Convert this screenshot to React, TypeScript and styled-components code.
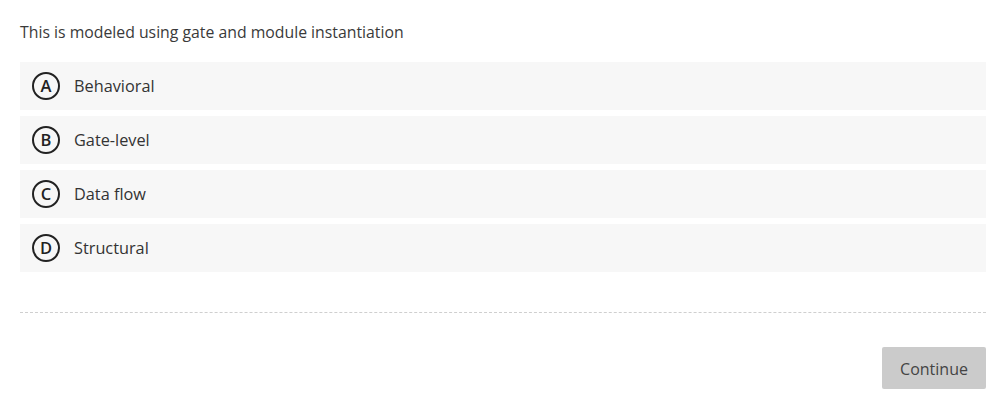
import React from "react";
import styled, { createGlobalStyle } from "styled-components";

const Global = createGlobalStyle`
  html, body { margin: 0; padding: 0; background: #fff; }
  body { font-family: "Open Sans", "Liberation Sans", sans-serif; color: #333; }
`;

const Page = styled.div`
  padding: 20px 22px 0 20px;
  display: flex;
  flex-direction: column;
`;

const Question = styled.div`
  font-size: 15.8px;
  line-height: 24px;
  color: #3a3a3a;
  margin-bottom: 18px;
`;

const Options = styled.div`
  display: flex;
  flex-direction: column;
  gap: 6px;
`;

const Option = styled.div`
  display: flex;
  align-items: center;
  height: 48px;
  background: #f7f7f7;
  padding-left: 12px;
  gap: 14px;
  box-sizing: border-box;
`;

const Badge = styled.span`
  width: 28px;
  height: 28px;
  box-sizing: border-box;
  border: 2px solid #222;
  border-radius: 50%;
  display: flex;
  align-items: center;
  justify-content: center;
  font-size: 16.5px;
  line-height: 1;
  font-weight: 600;
  color: #222;
`;

const Label = styled.span`
  font-size: 16.3px;
  color: #333;
`;

const Divider = styled.div`
  margin-top: 40px;
  border-top: 1px dashed #cfcfcf;
`;

const Footer = styled.div`
  display: flex;
  justify-content: flex-end;
  padding-top: 34px;
`;

const Button = styled.button`
  width: 104px;
  height: 42px;
  border: none;
  border-radius: 2px;
  background: #cbcbcb;
  color: #444;
  font-family: "Open Sans", "Liberation Sans", sans-serif;
  font-size: 16px;
  padding: 1px 0 0;
`;

const options = [
  ["A", "Behavioral"],
  ["B", "Gate-level"],
  ["C", "Data flow"],
  ["D", "Structural"],
];

export default function App() {
  return (
    <>
      <Global />
      <Page>
        <Question>This is modeled using gate and module instantiation</Question>
        <Options>
          {options.map(([k, v]) => (
            <Option key={k}>
              <Badge>{k}</Badge>
              <Label>{v}</Label>
            </Option>
          ))}
        </Options>
        <Divider />
        <Footer>
          <Button>Continue</Button>
        </Footer>
      </Page>
    </>
  );
}
